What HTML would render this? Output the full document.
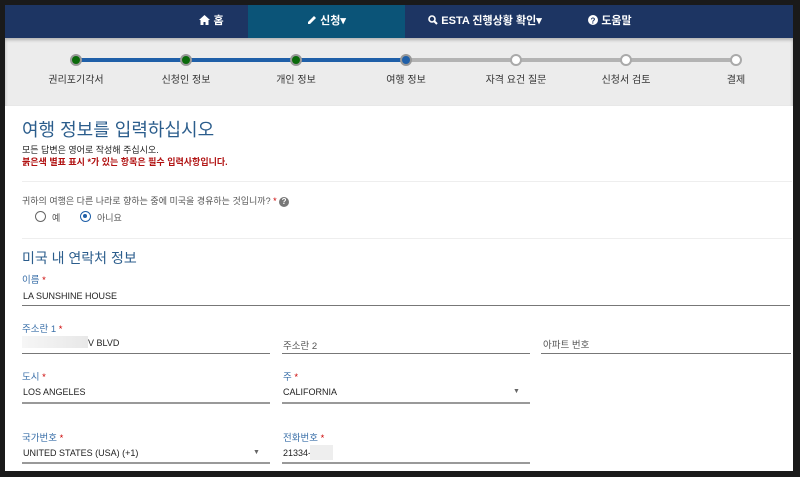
<!DOCTYPE html>
<html><head><meta charset="utf-8"><style>
*{margin:0;padding:0;box-sizing:border-box}
body{width:800px;height:477px;background:#1a1a1a;position:relative;overflow:hidden;font-family:"Liberation Sans","Noto Sans CJK KR",sans-serif;}
.pg{position:absolute;left:5px;top:5px;width:788px;height:466px;background:#fff;overflow:hidden}
.nav{position:absolute;left:0;top:0;width:788px;height:33px;background:#1d3563;}
.ni{position:absolute;top:0;height:33px;line-height:33px;color:#fff;font-size:11px;font-weight:bold;text-align:center}
.ni svg{vertical-align:-1px;margin-right:3px}
.prog{position:absolute;left:0;top:33px;width:788px;height:68px;background:#ececec;box-shadow:inset 0 2px 3px rgba(0,0,0,.25)}
.ln{position:absolute;height:4px;top:20px}
.dot{position:absolute;top:16px;width:12px;height:12px;border-radius:50%;margin-left:-6px}
.lb{position:absolute;top:33px;font-size:10px;color:#333;width:100px;margin-left:-50px;text-align:center}
.a{position:absolute;white-space:nowrap}
.lab{font-size:9.5px;color:#3a6fa8}
.val{font-size:9px;color:#222}
.ul{position:absolute;height:1px;background:#777}
.r{color:#c00}
</style></head><body>
<div class="pg">
<div class="nav">
<div class="ni" style="left:170px;width:73px"><svg width="11" height="10" viewBox="0 0 11 10"><path d="M5.5 0L0 5h1.5v5h3V7h2v3h3V5H11z" fill="#fff"/></svg>홈</div>
<div class="ni" style="left:243px;width:157px;background:#0b5478"><svg width="10" height="10" viewBox="0 0 10 10"><path d="M7 1l2 2-6 6H1V7z" fill="#fff"/></svg>신청▾</div>
<div class="ni" style="left:410px;width:140px"><svg width="10" height="10" viewBox="0 0 10 10"><circle cx="4" cy="4" r="3" fill="none" stroke="#fff" stroke-width="1.6"/><path d="M6 6l3 3" stroke="#fff" stroke-width="2"/></svg>ESTA 진행상황 확인▾</div>
<div class="ni" style="left:570px;width:70px"><svg width="10" height="10" viewBox="0 0 10 10"><circle cx="5" cy="5" r="5" fill="#fff"/><text x="5" y="8.3" font-size="8" font-weight="bold" text-anchor="middle" fill="#1d3563" font-family="Liberation Sans">?</text></svg>도움말</div>
</div>
<div class="prog">
<div class="ln" style="left:71px;width:330px;background:#1f5fa8"></div>
<div class="ln" style="left:401px;width:330px;background:#b3b3b3"></div>
<div class="dot" style="left:71px;background:#0a6a0a;border:2px solid #999"></div>
<div class="dot" style="left:181px;background:#0a6a0a;border:2px solid #999"></div>
<div class="dot" style="left:291px;background:#0a6a0a;border:2px solid #999"></div>
<div class="dot" style="left:401px;background:#1f5fa8;border:2px solid #999"></div>
<div class="dot" style="left:511px;background:#fff;border:2px solid #aaa"></div>
<div class="dot" style="left:621px;background:#fff;border:2px solid #aaa"></div>
<div class="dot" style="left:731px;background:#fff;border:2px solid #aaa"></div>
<div class="lb" style="left:71px">권리포기각서</div>
<div class="lb" style="left:181px">신청인 정보</div>
<div class="lb" style="left:291px">개인 정보</div>
<div class="lb" style="left:401px">여행 정보</div>
<div class="lb" style="left:511px">자격 요건 질문</div>
<div class="lb" style="left:621px">신청서 검토</div>
<div class="lb" style="left:731px">결제</div>
</div>
<div class="a" style="left:17px;top:111px;font-size:18px;color:#2b5d8c">여행 정보를 입력하십시오</div>
<div class="a" style="left:17px;top:138px;font-size:9px;color:#222">모든 답변은 영어로 작성해 주십시오.</div>
<div class="a" style="left:17px;top:150px;font-size:9px;color:#b01010;font-weight:bold">붉은색 별표 표시 *가 있는 항목은 필수 입력사항입니다.</div>
<div class="ul" style="left:17px;top:176px;width:770px;background:#eee"></div>
<div class="a" style="left:17px;top:189px;font-size:9px;color:#555">귀하의 여행은 다른 나라로 향하는 중에 미국을 경유하는 것입니까? <span class="r">*</span> <span style="display:inline-block;width:10px;height:10px;border-radius:50%;background:#777;color:#fff;font-size:8px;text-align:center;line-height:10px;font-weight:bold">?</span></div>
<div class="a" style="left:30px;top:206px;width:11px;height:11px;border:1.5px solid #666;border-radius:50%"></div>
<div class="a" style="left:47px;top:206px;font-size:9px;color:#555">예</div>
<div class="a" style="left:75px;top:206px;width:11px;height:11px;border:1.5px solid #1f5fa8;border-radius:50%"><div style="margin:2px;width:4px;height:4px;border-radius:50%;background:#1f5fa8"></div></div>
<div class="a" style="left:92px;top:206px;font-size:9px;color:#555">아니요</div>
<div class="ul" style="left:17px;top:233px;width:770px;background:#eee"></div>
<div class="a" style="left:17px;top:243px;font-size:14px;color:#2b5d8c">미국 내 연락처 정보</div>
<div class="a lab" style="left:17px;top:267px">이름 <span class="r">*</span></div>
<div class="a val" style="left:18px;top:286px">LA SUNSHINE HOUSE</div>
<div class="ul" style="left:17px;top:300px;width:768px"></div>
<div class="a lab" style="left:17px;top:316px">주소란 1 <span class="r">*</span></div>
<div class="a" style="left:17px;top:331px;width:66px;height:12px;background:linear-gradient(90deg,#f6f6f6,#e8e8e8)"></div>
<div class="a val" style="left:83px;top:333px">V BLVD</div>
<div class="ul" style="left:17px;top:348px;width:248px"></div>
<div class="a val" style="left:278px;top:333px;color:#555;font-size:9.5px">주소란 2</div>
<div class="ul" style="left:277px;top:348px;width:248px"></div>
<div class="a val" style="left:538px;top:332px;color:#555;font-size:9.5px">아파트 번호</div>
<div class="ul" style="left:536px;top:348px;width:250px"></div>
<div class="a lab" style="left:17px;top:364px">도시 <span class="r">*</span></div>
<div class="a val" style="left:18px;top:382px">LOS ANGELES</div>
<div class="ul" style="left:17px;top:397px;width:248px;background:#999;height:2px"></div>
<div class="a lab" style="left:278px;top:364px">주 <span class="r">*</span></div>
<div class="a val" style="left:278px;top:382px">CALIFORNIA</div>
<div class="a" style="left:508px;top:383px;font-size:7px;color:#666">▼</div>
<div class="ul" style="left:277px;top:397px;width:248px;background:#999;height:2px"></div>
<div class="a lab" style="left:17px;top:425px">국가번호 <span class="r">*</span></div>
<div class="a val" style="left:18px;top:443px">UNITED STATES (USA) (+1)</div>
<div class="a" style="left:248px;top:444px;font-size:7px;color:#666">▼</div>
<div class="ul" style="left:17px;top:457px;width:248px;background:#999;height:2px"></div>
<div class="a lab" style="left:278px;top:425px">전화번호 <span class="r">*</span></div>
<div class="a val" style="left:278px;top:443px">21334-</div>
<div class="a" style="left:305px;top:440px;width:23px;height:15px;background:#eee"></div>
<div class="ul" style="left:277px;top:457px;width:248px;background:#999;height:2px"></div>
</div>
</body></html>
